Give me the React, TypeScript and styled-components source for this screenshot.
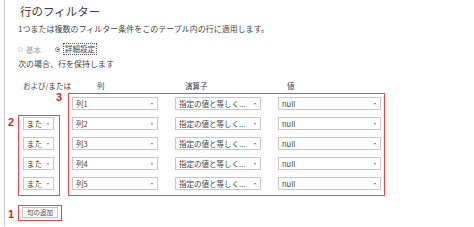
import React from 'react';
import styled, { createGlobalStyle } from 'styled-components';

const GlobalStyle = createGlobalStyle`
  html, body {
    margin: 0;
    padding: 0;
    background: #ffffff;
  }
  body {
    font-family: "Noto Sans CJK JP", "Noto Sans", sans-serif;
    color: #444;
  }
`;

const Panel = styled.div`
  margin-left: 4px;
  border-left: 1px solid #c9c9c9;
  padding: 1px 0 0 13px;
  height: 226px;
  box-sizing: border-box;
`;

const Title = styled.h1`
  margin: 0 0 0 2px;
  font-size: 11.5px;
  line-height: 20px;
  font-weight: 400;
  color: #3c3c3c;
`;

const Desc = styled.p`
  margin: 2px 0 0;
  font-size: 8px;
  line-height: 12px;
  color: #444;
`;

const RadioRow = styled.div`
  display: flex;
  align-items: center;
  gap: 14px;
  margin-top: 8px;
  height: 12px;
`;

const RadioItem = styled.label<{ $disabled?: boolean }>`
  display: flex;
  align-items: center;
  gap: 3px;
  font-size: 7.5px;
  color: ${p => (p.$disabled ? '#a8a8a8' : '#444')};
`;

const RadioDot = styled.span<{ $checked?: boolean }>`
  width: 5px;
  height: 5px;
  border-radius: 50%;
  border: 1px solid ${p => (p.$checked ? '#888' : '#cfcfcf')};
  box-sizing: border-box;
  position: relative;
  &::after {
    content: '';
    display: ${p => (p.$checked ? 'block' : 'none')};
    position: absolute;
    left: 1px;
    top: 1px;
    width: 1.5px;
    height: 1.5px;
    border-radius: 50%;
    background: #444;
  }
`;

const FocusLabel = styled.span`
  border: 1px dotted #555;
  padding: 0 1px;
  line-height: 10px;
`;

const KeepText = styled.p`
  margin: 3px 0 0;
  font-size: 8px;
  line-height: 12px;
`;

const HeaderRow = styled.div`
  display: grid;
  grid-template-columns: 74px 88px 102px auto;
  margin-top: 11px;
  padding-left: 5px;
  font-size: 7.5px;
  line-height: 9px;
  color: #444;
`;

const Body = styled.div`
  display: flex;
  align-items: flex-end;
  gap: 8px;
  margin-top: 3px;
`;

const AnnotatedBox = styled.div`
  position: relative;
  border: 1.5px solid #e6484b;
`;

const AndOrBox = styled(AnnotatedBox)`
  display: flex;
  flex-direction: column;
  gap: 7px;
  padding: 1px 5px 5px 4px;
`;

const ConditionBox = styled(AnnotatedBox)`
  display: grid;
  grid-template-columns: 86px 86px 103px;
  column-gap: 17px;
  row-gap: 7px;
  padding: 3px 3px 5px 3px;
`;

const Badge = styled.span<{ $left: number; $top: number }>`
  position: absolute;
  left: ${p => p.$left}px;
  top: ${p => p.$top}px;
  font-family: "Liberation Sans", Arial, sans-serif;
  font-weight: 700;
  font-size: 11px;
  line-height: 9px;
  color: #d4222c;
`;

const Select = styled.div<{ $width?: number }>`
  display: flex;
  align-items: center;
  justify-content: space-between;
  height: 13px;
  box-sizing: border-box;
  ${p => (p.$width ? `width: ${p.$width}px;` : '')}
  border: 1px solid #c8c8c8;
  background: #fff;
  padding: 0 4px 0 3px;
  font-size: 7.5px;
  color: #444;
  white-space: nowrap;
  overflow: hidden;
`;

const Caret = styled.span`
  width: 0;
  height: 0;
  border-left: 1.5px solid transparent;
  border-right: 1.5px solid transparent;
  border-top: 2px solid #777;
  margin-left: 4px;
  flex-shrink: 0;
`;

const ActionBox = styled(AnnotatedBox)`
  display: inline-flex;
  margin-top: 7px;
  padding: 1.5px 3px;
`;

const AddButton = styled.button`
  font-family: "Noto Sans CJK JP", sans-serif;
  font-size: 6.5px;
  line-height: 9px;
  color: #444;
  background: #fff;
  border: 1px solid #c2c2c2;
  padding: 0 4px;
  height: 11px;
`;

const rows = [1, 2, 3, 4, 5];

const App: React.FC = () => (
  <>
    <GlobalStyle />
    <Panel>
      <Title>行のフィルター</Title>
      <Desc>1つまたは複数のフィルター条件をこのテーブル内の行に適用します。</Desc>
      <RadioRow>
        <RadioItem $disabled>
          <RadioDot />
          基本
        </RadioItem>
        <RadioItem>
          <RadioDot $checked />
          <FocusLabel>詳細設定</FocusLabel>
        </RadioItem>
      </RadioRow>
      <KeepText>次の場合、行を保持します</KeepText>
      <HeaderRow>
        <span>および/または</span>
        <span>列</span>
        <span>演算子</span>
        <span>値</span>
      </HeaderRow>
      <Body>
        <AndOrBox>
          <Badge $left={-11} $top={2}>2</Badge>
          {rows.slice(1).map(n => (
            <Select key={n} $width={31}>
              また
              <Caret />
            </Select>
          ))}
        </AndOrBox>
        <ConditionBox>
          <Badge $left={-13} $top={-1}>3</Badge>
          {rows.map(n => (
            <React.Fragment key={n}>
              <Select>
                列{n}
                <Caret />
              </Select>
              <Select>
                指定の値と等しく...
                <Caret />
              </Select>
              <Select>
                null
                <Caret />
              </Select>
            </React.Fragment>
          ))}
        </ConditionBox>
      </Body>
      <ActionBox>
        <Badge $left={-11} $top={4}>1</Badge>
        <AddButton>句の追加</AddButton>
      </ActionBox>
    </Panel>
  </>
);

export default App;
